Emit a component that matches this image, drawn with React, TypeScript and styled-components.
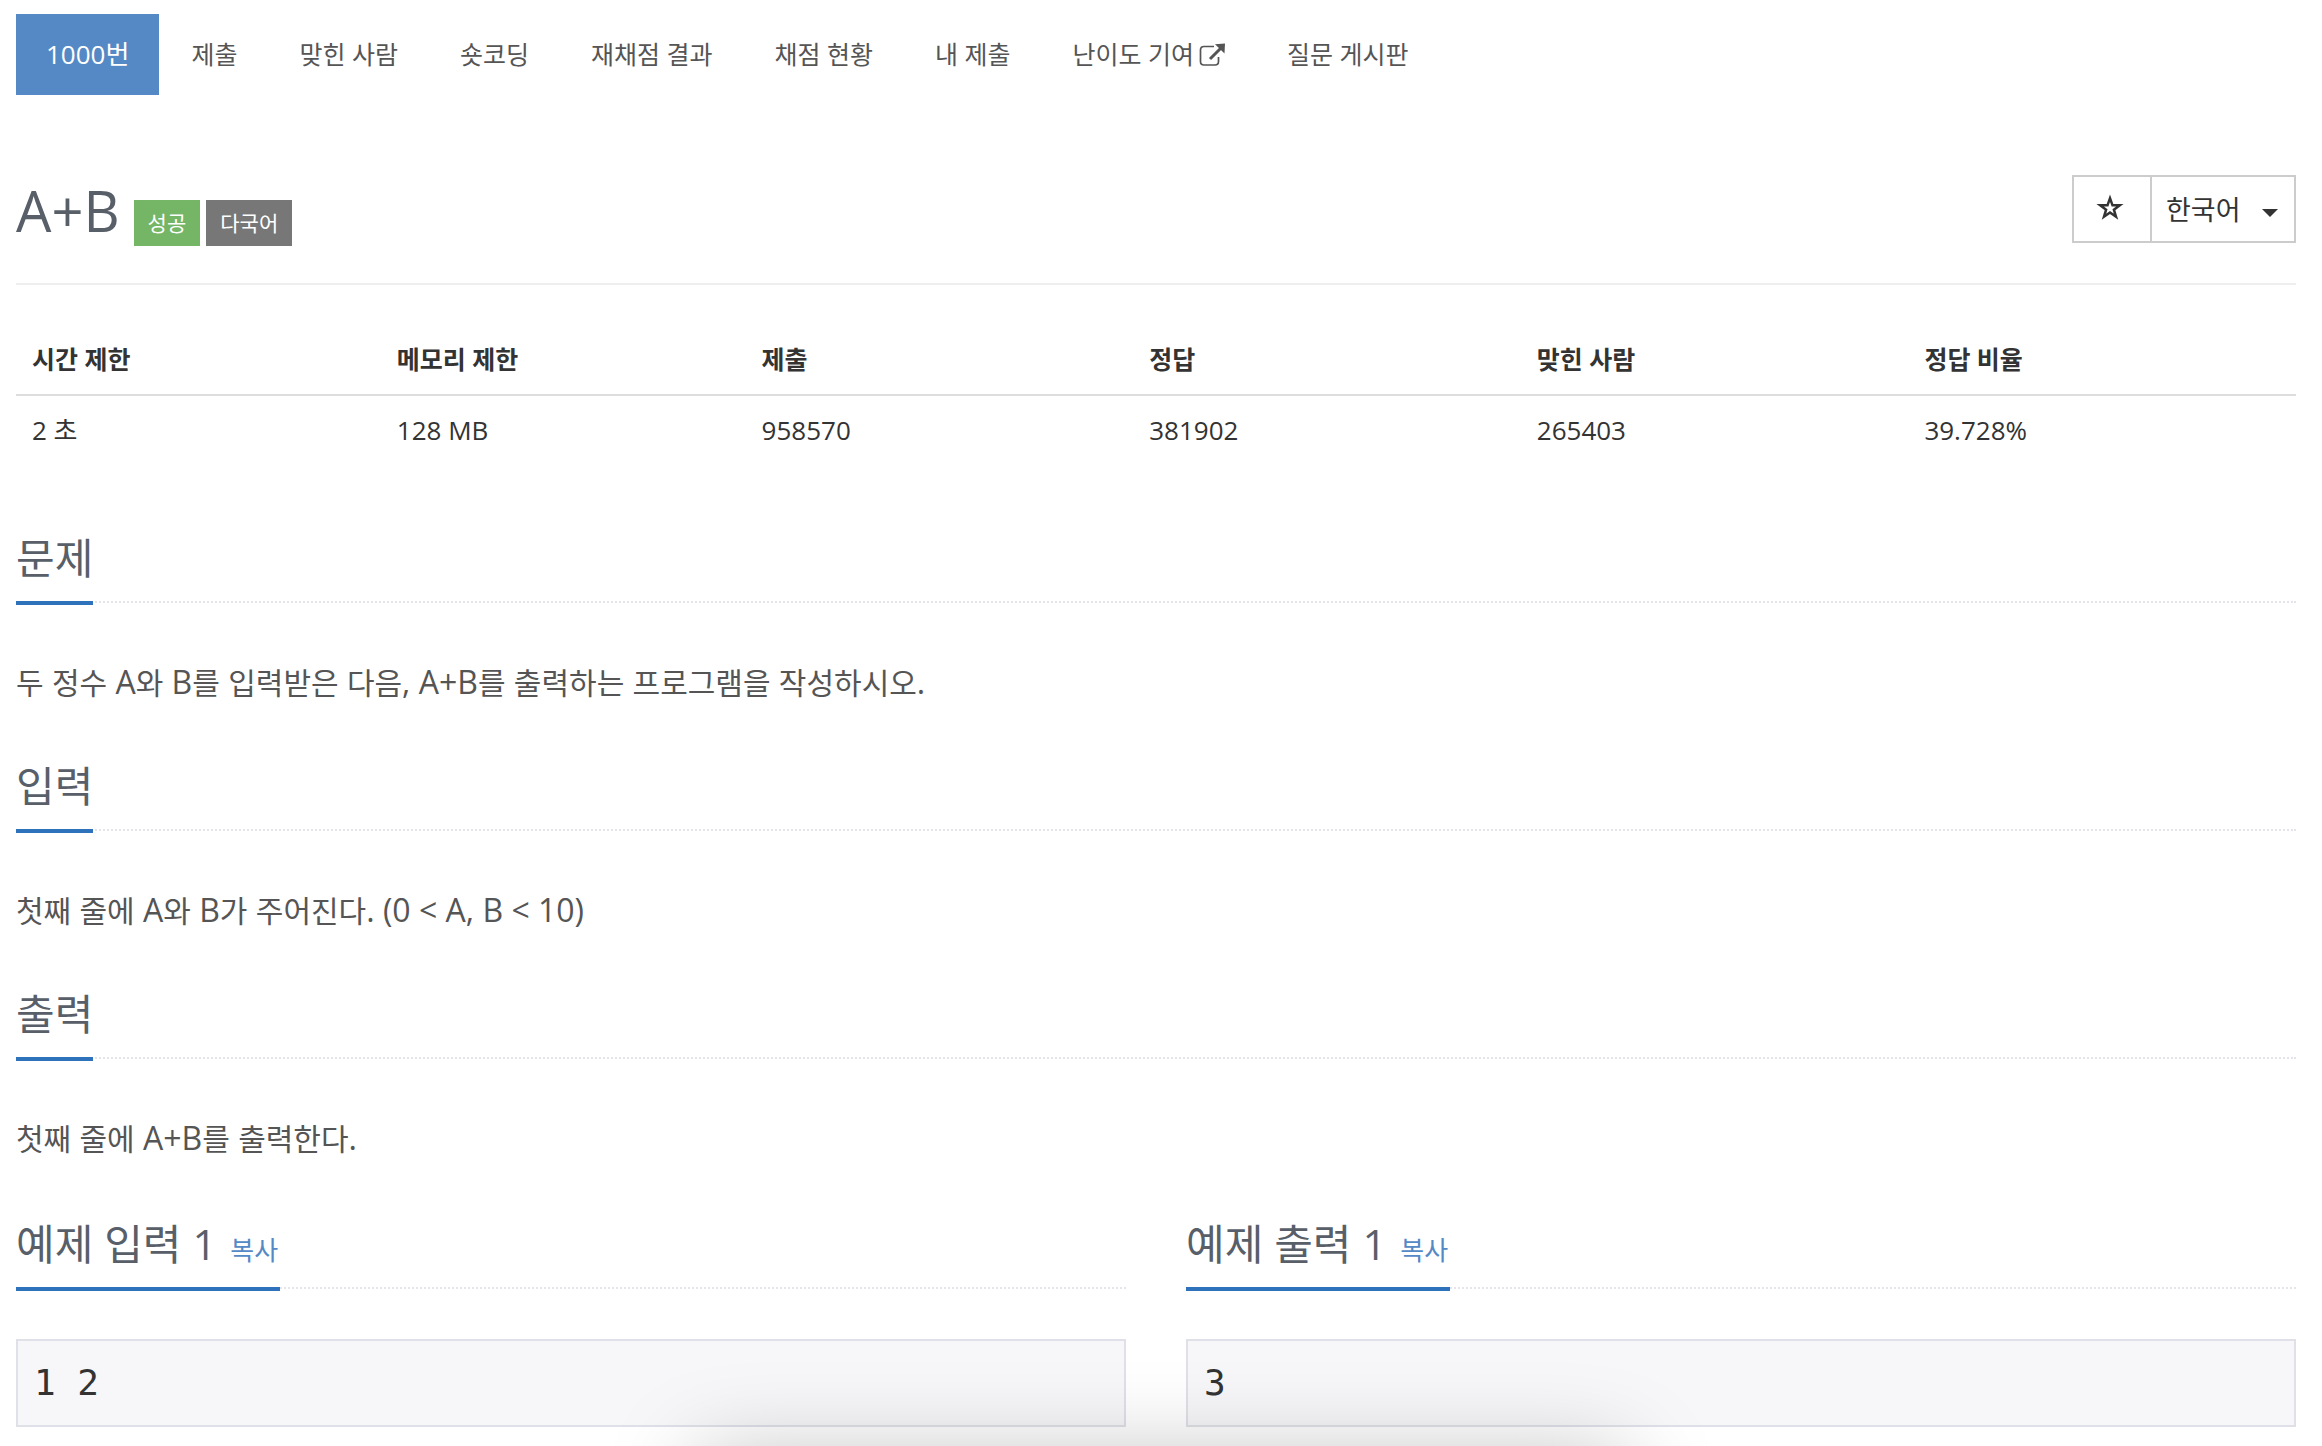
import React from "react";
import styled, { createGlobalStyle } from "styled-components";

const sans = `"Open Sans", "Noto Sans CJK KR", sans-serif`;

const GlobalStyle = createGlobalStyle`
  *, *::before, *::after { box-sizing: border-box; }
  body {
    margin: 0;
    background: #fff;
    color: #333;
    font: 25px/37px ${sans};
  }
  h1, h2, p, pre, ul { margin: 0; padding: 0; font-weight: 400; }
`;

const Page = styled.main`
  padding: 14px 26px 18px 16px;
`;

const NavList = styled.ul`
  display: flex;
  flex-wrap: wrap;
  gap: 2px;
  list-style: none;
`;

const NavLink = styled.a<{ $active?: boolean }>`
  display: flex;
  align-items: center;
  gap: 5px;
  height: 81px;
  padding: 0 30px;
  text-decoration: none;
  font-size: ${(p) => (p.$active ? 26 : 25)}px;
  color: ${(p) => (p.$active ? "#fff" : "#555")};
  background: ${(p) => (p.$active ? "#5589c6" : "transparent")};
`;

const TitleBar = styled.header`
  display: flex;
  justify-content: space-between;
  align-items: flex-start;
  height: 110px;
  margin-top: 80px;
  border-bottom: 2px solid #eee;
`;

const TitleGroup = styled.div`
  display: flex;
  align-items: flex-end;
  gap: 6px;
`;

const Title = styled.h1`
  margin-right: 8px;
  font-size: 56px;
  line-height: 71px;
  color: #585f69;
`;

const Badge = styled.span<{ $tone: "success" | "muted" }>`
  height: 46px;
  padding: 0 14px;
  font-size: 21px;
  line-height: 46px;
  color: #fff;
  background: ${(p) => (p.$tone === "success" ? "#74b566" : "#777")};
`;

const ButtonGroup = styled.div`
  display: flex;
  height: 68px;
  border: 2px solid #ccc;
`;

const StarButton = styled.button`
  display: flex;
  align-items: center;
  justify-content: center;
  width: 78px;
  padding: 0 4px 2px 0;
  border: 0;
  border-right: 2px solid #ccc;
  background: #fff;
  color: #333;
`;

const SelectBox = styled.div`
  display: grid;
  align-items: center;
  width: 142px;

  & > * { grid-area: 1 / 1; }
  & > svg { justify-self: end; margin: 8px 16px 0 0; pointer-events: none; }
`;

const LanguageSelect = styled.select`
  appearance: none;
  width: 100%;
  height: 64px;
  padding: 0 0 0 14px;
  border: 0;
  border-radius: 0;
  background: #fff;
  color: #333;
  font: 27px/37px ${sans};
`;

const InfoTable = styled.table`
  width: 100%;
  margin: 40px 0 64px;
  border-collapse: collapse;
  table-layout: fixed;

  th, td { padding: 16px; text-align: left; }
  th { border-bottom: 2px solid #ddd; font-weight: 700; }
  td { font-size: 26px; }
  th:nth-child(-n + 2) { width: 16%; }
`;

const Section = styled.section`
  margin-bottom: 50px;
`;

const Headline = styled.div`
  display: flex;
  border-bottom: 2px dotted #e4e4ec;
`;

const HeadlineText = styled.h2`
  margin-bottom: -4px;
  padding-bottom: 14px;
  border-bottom: 4px solid #2e72bb;
  font-size: 42px;
  line-height: 58px;
  color: #585f69;
`;

const Statement = styled.p`
  margin-top: 54px;
  font-size: 32px;
  line-height: 50px;
  color: #555;
`;

const Hangul = styled.span`
  font-size: 30px;
  line-height: 1;
`;

const Samples = styled.div`
  display: grid;
  grid-template-columns: 1fr 1fr;
  gap: 60px;
  margin-top: 52px;
`;

const CopyButton = styled.button`
  margin-left: 3px;
  padding: 0 2px 0 0;
  border: 0;
  background: none;
  color: #5589c6;
  font: 26px/37px ${sans};
`;

const SampleData = styled.pre`
  margin-top: 50px;
  padding: 18px 16px;
  border: 2px solid #e0e0e8;
  background: #f7f7f9;
  color: #333;
  font: 36px/48px "DejaVu Sans Mono", "Noto Sans CJK KR", monospace;
`;

const DockShadow = styled.div`
  position: fixed;
  left: 50%;
  bottom: -110px;
  width: 40%;
  height: 100px;
  transform: translateX(-50%);
  box-shadow: 0 0 90px rgba(0, 0, 0, 0.25);
  pointer-events: none;
`;

const ExternalIcon = () => (
  <svg width="26" height="24" viewBox="0 0 26 24" fill="none" stroke="currentColor" aria-hidden="true">
    <path strokeWidth="1.700" d="M15 3.500H5Q1.500 3.500 1.500 7V18.500Q1.500 22 5 22H16Q19.500 22 19.500 18.500V14" />
    <path strokeWidth="3" d="M11 16 22 5" />
    <path fill="currentColor" stroke="none" d="M16 1.200 26 .5 25.500 10.500Z" />
  </svg>
);

const StarIcon = () => (
  <svg width="28" height="28" viewBox="0 0 28 28" fill="none" stroke="currentColor" strokeWidth="2.500" aria-hidden="true">
    <path d="M14 4.200 16.500 11.300 23.800 11.300 17.900 15.700 20 22.800 14 18.600 8 22.800 10.100 15.700 4.200 11.300 11.500 11.300Z" />
  </svg>
);

const Caret = () => (
  <svg width="16" height="8" viewBox="0 0 16 8" fill="#333" aria-hidden="true">
    <path d="M0 0h16L8 8z" />
  </svg>
);

/* Hangul glyphs are set slightly smaller than the Latin ones beside them. */
const Mixed = ({ text }: { text: string }) => (
  <>
    {text.split(/([가-힣]+)/).map((run, i) => (i % 2 ? <Hangul key={i}>{run}</Hangul> : run))}
  </>
);

const navItems = ["1000번", "제출", "맞힌 사람", "숏코딩", "재채점 결과", "채점 현황", "내 제출", "난이도 기여", "질문 게시판"];

const info = [
  ["시간 제한", "2 초"],
  ["메모리 제한", "128 MB"],
  ["제출", "958570"],
  ["정답", "381902"],
  ["맞힌 사람", "265403"],
  ["정답 비율", "39.728%"],
];

const sections = [
  { title: "문제", body: "두 정수 A와 B를 입력받은 다음, A+B를 출력하는 프로그램을 작성하시오." },
  { title: "입력", body: "첫째 줄에 A와 B가 주어진다. (0 < A, B < 10)" },
  { title: "출력", body: "첫째 줄에 A+B를 출력한다." },
];

const samples = [
  { title: "예제 입력 1", data: "1 2" },
  { title: "예제 출력 1", data: "3" },
];

export default function App() {
  return (
    <>
      <GlobalStyle />
      <Page>
        <nav>
          <NavList>
            {navItems.map((label, i) => (
              <li key={label}>
                <NavLink href="#" $active={i === 0}>
                  {label}
                  {label === "난이도 기여" && <ExternalIcon />}
                </NavLink>
              </li>
            ))}
          </NavList>
        </nav>

        <TitleBar>
          <TitleGroup>
            <Title>A+B</Title>
            <Badge $tone="success">성공</Badge>
            <Badge $tone="muted">다국어</Badge>
          </TitleGroup>
          <ButtonGroup>
            <StarButton type="button" aria-label="즐겨찾기">
              <StarIcon />
            </StarButton>
            <SelectBox>
              <LanguageSelect aria-label="언어" defaultValue="ko">
                <option value="ko">한국어</option>
              </LanguageSelect>
              <Caret />
            </SelectBox>
          </ButtonGroup>
        </TitleBar>

        <InfoTable>
          <thead>
            <tr>
              {info.map(([label]) => (
                <th key={label} scope="col">{label}</th>
              ))}
            </tr>
          </thead>
          <tbody>
            <tr>
              {info.map(([label, value]) => (
                <td key={label}>{value}</td>
              ))}
            </tr>
          </tbody>
        </InfoTable>

        {sections.map((s) => (
          <Section key={s.title}>
            <Headline>
              <HeadlineText>{s.title}</HeadlineText>
            </Headline>
            <Statement>
              <Mixed text={s.body} />
            </Statement>
          </Section>
        ))}

        <Samples>
          {samples.map((s) => (
            <section key={s.title}>
              <Headline>
                <HeadlineText>
                  {s.title} <CopyButton type="button">복사</CopyButton>
                </HeadlineText>
              </Headline>
              <SampleData>{s.data}</SampleData>
            </section>
          ))}
        </Samples>
      </Page>
      <DockShadow />
    </>
  );
}
